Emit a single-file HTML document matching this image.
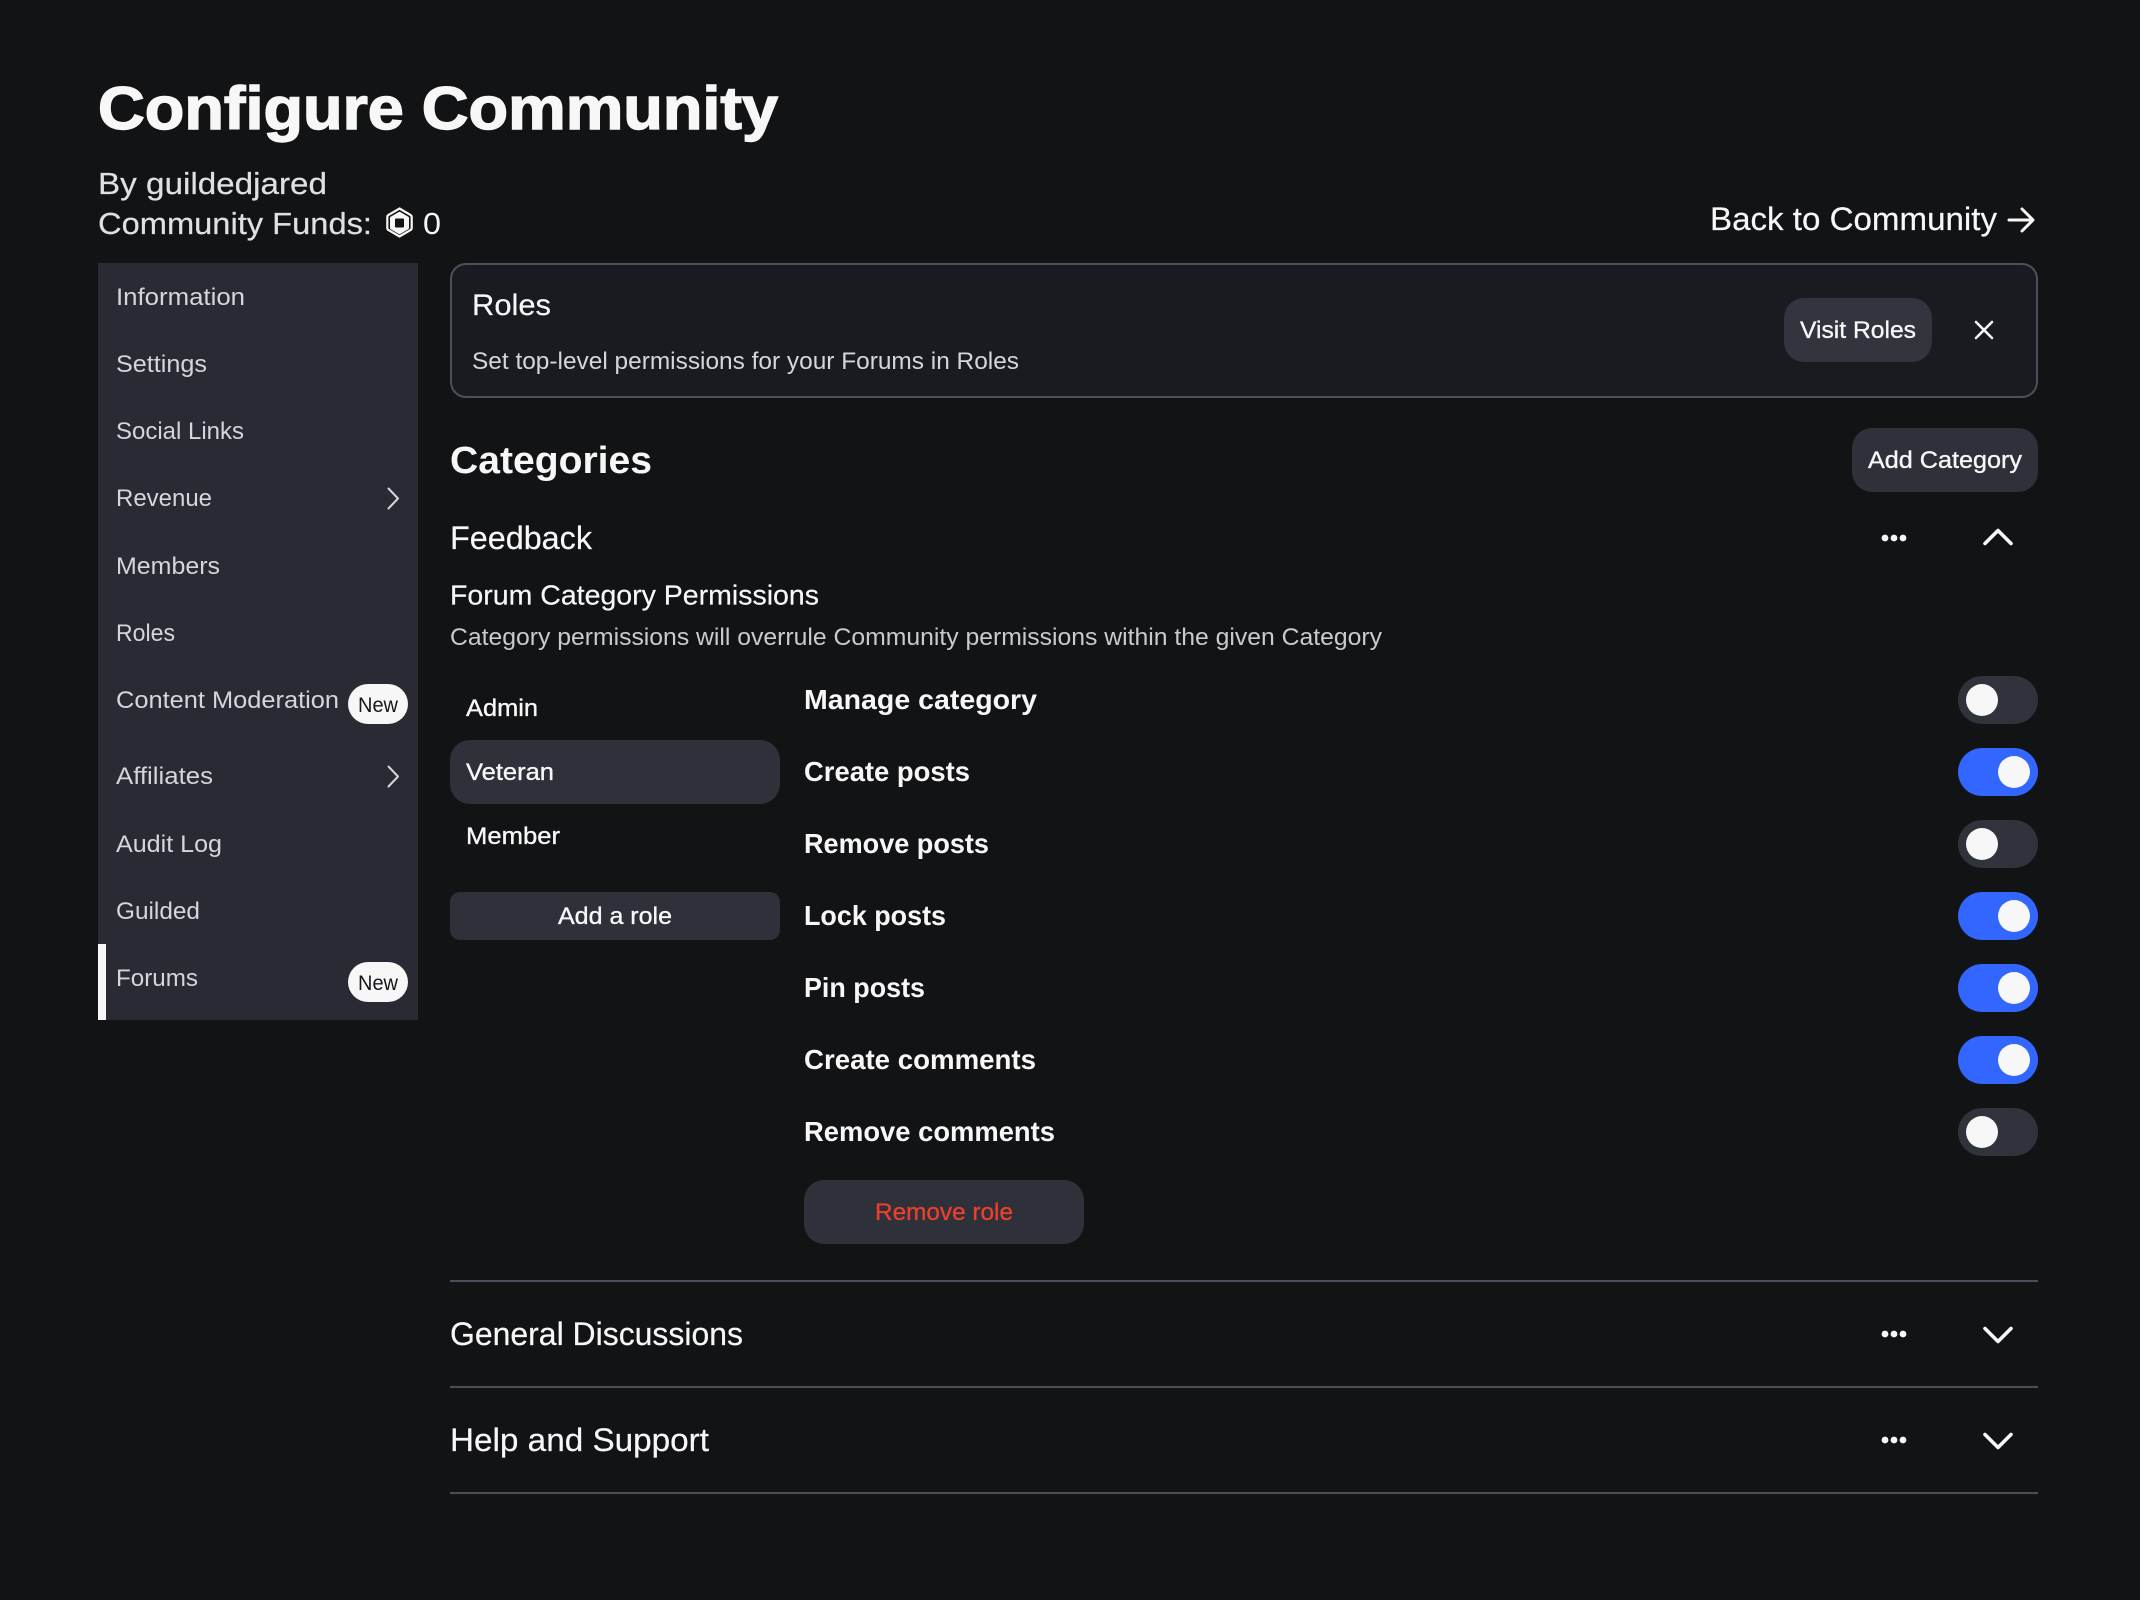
<!DOCTYPE html>
<html lang="en">
<head>
<meta charset="utf-8">
<title>Configure Community</title>
<style>
html,body{margin:0;padding:0;background:#121315;width:2140px;height:1600px;overflow:hidden}
svg{display:block}
text{font-family:"Liberation Sans",sans-serif;font-kerning:normal}
.n{font-size:24px;fill:#d5d6dc}
.w{font-size:24px;fill:#f7f7f8;stroke:#f7f7f8;stroke-width:.35px}
.p{font-size:28px;font-weight:700;fill:#f7f7f8}
.h{font-size:32px;fill:#f7f7f8}
.s{font-size:24px;fill:#c9cad1}
.b{font-size:21px;fill:#17181c}
.ic{fill:none;stroke:#f7f7f8;stroke-linecap:round;stroke-linejoin:round}
</style>
</head>
<body>
<svg width="2140" height="1600" viewBox="0 0 2140 1600" xmlns="http://www.w3.org/2000/svg">
<rect width="2140" height="1600" fill="#121315"/>

<!-- header -->
<text x="98" y="129" textLength="680" lengthAdjust="spacingAndGlyphs" style="font-size:60px;font-weight:700;fill:#f7f7f8;stroke:#f7f7f8;stroke-width:1.4px">Configure Community</text>
<text x="98" y="194" textLength="229" lengthAdjust="spacingAndGlyphs" style="font-size:31px;fill:#dfe0e6;stroke:#dfe0e6;stroke-width:.2px">By guildedjared</text>
<text x="98" y="234" textLength="274" lengthAdjust="spacingAndGlyphs" style="font-size:31px;fill:#dfe0e6;stroke:#dfe0e6;stroke-width:.2px">Community Funds:</text>
<g>
<path d="M399.500 208.500l11 6.400a2.500 2.500 0 0 1 1.200 2.100v11a2.500 2.500 0 0 1-1.200 2.100l-11 6.400-11-6.400a2.500 2.500 0 0 1-1.200-2.100v-11a2.500 2.500 0 0 1 1.200-2.100z" fill="none" stroke="#f7f7f8" stroke-width="2.200"/>
<path d="M399.500 212.800l8.500 4.900v10.600l-8.500 4.900-8.500-4.900v-10.600z" fill="#f7f7f8" stroke="#f7f7f8" stroke-width="2" stroke-linejoin="round"/>
<rect x="395" y="218.500" width="9" height="9" rx="1" fill="#121315"/>
</g>
<text x="423" y="234" textLength="18" lengthAdjust="spacingAndGlyphs" style="font-size:31px;fill:#f7f7f8">0</text>

<text x="1710" y="230" textLength="287" lengthAdjust="spacingAndGlyphs" style="font-size:32px;fill:#f7f7f8;stroke:#f7f7f8;stroke-width:.2px">Back to Community</text>
<path class="ic" stroke-width="3" d="M2009 220H2032M2022 209L2033 220L2022 231"/>

<!-- sidebar -->
<rect x="98" y="263" width="320" height="757" fill="#292a33"/>
<rect x="98" y="944" width="8" height="76" fill="#f7f7f8"/>
<text class="n" x="116" y="305" textLength="129" lengthAdjust="spacingAndGlyphs">Information</text>
<text class="n" x="116" y="372" textLength="91" lengthAdjust="spacingAndGlyphs">Settings</text>
<text class="n" x="116" y="439" textLength="128" lengthAdjust="spacingAndGlyphs">Social Links</text>
<text class="n" x="116" y="506" textLength="96" lengthAdjust="spacingAndGlyphs">Revenue</text>
<text class="n" x="116" y="574" textLength="104" lengthAdjust="spacingAndGlyphs">Members</text>
<text class="n" x="116" y="641" textLength="59" lengthAdjust="spacingAndGlyphs">Roles</text>
<text class="n" x="116" y="708" textLength="223" lengthAdjust="spacingAndGlyphs">Content Moderation</text>
<text class="n" x="116" y="784" textLength="97" lengthAdjust="spacingAndGlyphs">Affiliates</text>
<text class="n" x="116" y="852" textLength="106" lengthAdjust="spacingAndGlyphs">Audit Log</text>
<text class="n" x="116" y="919" textLength="84" lengthAdjust="spacingAndGlyphs">Guilded</text>
<text class="n" x="116" y="986" textLength="82" lengthAdjust="spacingAndGlyphs">Forums</text>
<path d="M388.500 488.500L398 498.500L388.500 508.500" fill="none" stroke="#d5d6dc" stroke-width="2" stroke-linecap="round" stroke-linejoin="round"/>
<path d="M388.500 766.500L398 776.500L388.500 786.500" fill="none" stroke="#d5d6dc" stroke-width="2" stroke-linecap="round" stroke-linejoin="round"/>
<rect x="348" y="684" width="60" height="40" rx="20" fill="#f7f7f8"/>
<text class="b" x="358" y="712" textLength="40" lengthAdjust="spacingAndGlyphs">New</text>
<rect x="348" y="962" width="60" height="40" rx="20" fill="#f7f7f8"/>
<text class="b" x="358" y="990" textLength="40" lengthAdjust="spacingAndGlyphs">New</text>

<!-- banner -->
<rect x="451" y="264" width="1586" height="133" rx="15" fill="#1a1b20" stroke="#4d4f5c" stroke-width="2"/>
<text x="472" y="315" textLength="79" lengthAdjust="spacingAndGlyphs" style="font-size:30px;fill:#f7f7f8;stroke:#f7f7f8;stroke-width:.2px">Roles</text>
<text class="n" x="472" y="369" textLength="547" lengthAdjust="spacingAndGlyphs">Set top-level permissions for your Forums in Roles</text>
<rect x="1784" y="298" width="148" height="64" rx="20" fill="#32343e"/>
<text class="w" x="1800" y="338" textLength="116" lengthAdjust="spacingAndGlyphs">Visit Roles</text>
<path class="ic" stroke-width="2.600" d="M1976 322L1992 338M1992 322L1976 338"/>

<!-- categories -->
<text x="450" y="473" textLength="202" lengthAdjust="spacingAndGlyphs" style="font-size:38px;font-weight:700;fill:#f7f7f8">Categories</text>
<rect x="1852" y="428" width="186" height="64" rx="20" fill="#2f313a"/>
<text class="w" x="1868" y="468" textLength="154" lengthAdjust="spacingAndGlyphs">Add Category</text>

<text class="h" x="450" y="549" textLength="142" lengthAdjust="spacingAndGlyphs" style="stroke:#f7f7f8;stroke-width:.2px">Feedback</text>
<g fill="#f7f7f8"><circle cx="1885" cy="538" r="3.400"/><circle cx="1894" cy="538" r="3.400"/><circle cx="1903" cy="538" r="3.400"/></g>
<path class="ic" stroke-width="3.600" d="M1985 543.500L1998 530.500L2011 543.500"/>

<text x="450" y="604.500" textLength="369" lengthAdjust="spacingAndGlyphs" style="font-size:28px;fill:#f7f7f8;stroke:#f7f7f8;stroke-width:.2px">Forum Category Permissions</text>
<text class="s" x="450" y="645" textLength="932" lengthAdjust="spacingAndGlyphs">Category permissions will overrule Community permissions within the given Category</text>

<!-- roles column -->
<rect x="450" y="740" width="330" height="64" rx="20" fill="#2f313a"/>
<text class="w" x="466" y="716" textLength="72" lengthAdjust="spacingAndGlyphs">Admin</text>
<text class="w" x="466" y="780" textLength="88" lengthAdjust="spacingAndGlyphs">Veteran</text>
<text class="w" x="466" y="844" textLength="94" lengthAdjust="spacingAndGlyphs">Member</text>
<rect x="450" y="892" width="330" height="48" rx="10" fill="#2f313a"/>
<text class="w" x="558" y="924" textLength="114" lengthAdjust="spacingAndGlyphs">Add a role</text>

<!-- permissions -->
<text class="p" x="804" y="709" textLength="233" lengthAdjust="spacingAndGlyphs">Manage category</text>
<text class="p" x="804" y="781" textLength="166" lengthAdjust="spacingAndGlyphs">Create posts</text>
<text class="p" x="804" y="853" textLength="185" lengthAdjust="spacingAndGlyphs">Remove posts</text>
<text class="p" x="804" y="925" textLength="142" lengthAdjust="spacingAndGlyphs">Lock posts</text>
<text class="p" x="804" y="997" textLength="121" lengthAdjust="spacingAndGlyphs">Pin posts</text>
<text class="p" x="804" y="1069" textLength="232" lengthAdjust="spacingAndGlyphs">Create comments</text>
<text class="p" x="804" y="1141" textLength="251" lengthAdjust="spacingAndGlyphs">Remove comments</text>

<!-- toggles -->
<rect x="1958" y="676" width="80" height="48" rx="24" fill="#30333b"/><circle cx="1982" cy="700" r="16" fill="#f7f7f8"/>
<rect x="1958" y="748" width="80" height="48" rx="24" fill="#3366ff"/><circle cx="2014" cy="772" r="16" fill="#f7f7f8"/>
<rect x="1958" y="820" width="80" height="48" rx="24" fill="#30333b"/><circle cx="1982" cy="844" r="16" fill="#f7f7f8"/>
<rect x="1958" y="892" width="80" height="48" rx="24" fill="#3366ff"/><circle cx="2014" cy="916" r="16" fill="#f7f7f8"/>
<rect x="1958" y="964" width="80" height="48" rx="24" fill="#3366ff"/><circle cx="2014" cy="988" r="16" fill="#f7f7f8"/>
<rect x="1958" y="1036" width="80" height="48" rx="24" fill="#3366ff"/><circle cx="2014" cy="1060" r="16" fill="#f7f7f8"/>
<rect x="1958" y="1108" width="80" height="48" rx="24" fill="#30333b"/><circle cx="1982" cy="1132" r="16" fill="#f7f7f8"/>

<!-- remove role -->
<rect x="804" y="1180" width="280" height="64" rx="20" fill="#2f313a"/>
<text x="875" y="1220" textLength="138" lengthAdjust="spacingAndGlyphs" style="font-size:24px;fill:#ea3f2e;stroke:#ea3f2e;stroke-width:.35px">Remove role</text>

<!-- dividers and collapsed categories -->
<rect x="450" y="1280" width="1588" height="2" fill="#4b4d5a"/>
<text class="h" x="450" y="1345" textLength="293" lengthAdjust="spacingAndGlyphs" style="stroke:#f7f7f8;stroke-width:.2px">General Discussions</text>
<g fill="#f7f7f8"><circle cx="1885" cy="1334" r="3.400"/><circle cx="1894" cy="1334" r="3.400"/><circle cx="1903" cy="1334" r="3.400"/></g>
<path class="ic" stroke-width="3.600" d="M1985 1328.500L1998 1341.500L2011 1328.500"/>

<rect x="450" y="1386" width="1588" height="2" fill="#4b4d5a"/>
<text class="h" x="450" y="1451" textLength="259" lengthAdjust="spacingAndGlyphs" style="stroke:#f7f7f8;stroke-width:.2px">Help and Support</text>
<g fill="#f7f7f8"><circle cx="1885" cy="1440" r="3.400"/><circle cx="1894" cy="1440" r="3.400"/><circle cx="1903" cy="1440" r="3.400"/></g>
<path class="ic" stroke-width="3.600" d="M1985 1434.500L1998 1447.500L2011 1434.500"/>

<rect x="450" y="1492" width="1588" height="2" fill="#4b4d5a"/>
</svg>
</body>
</html>
